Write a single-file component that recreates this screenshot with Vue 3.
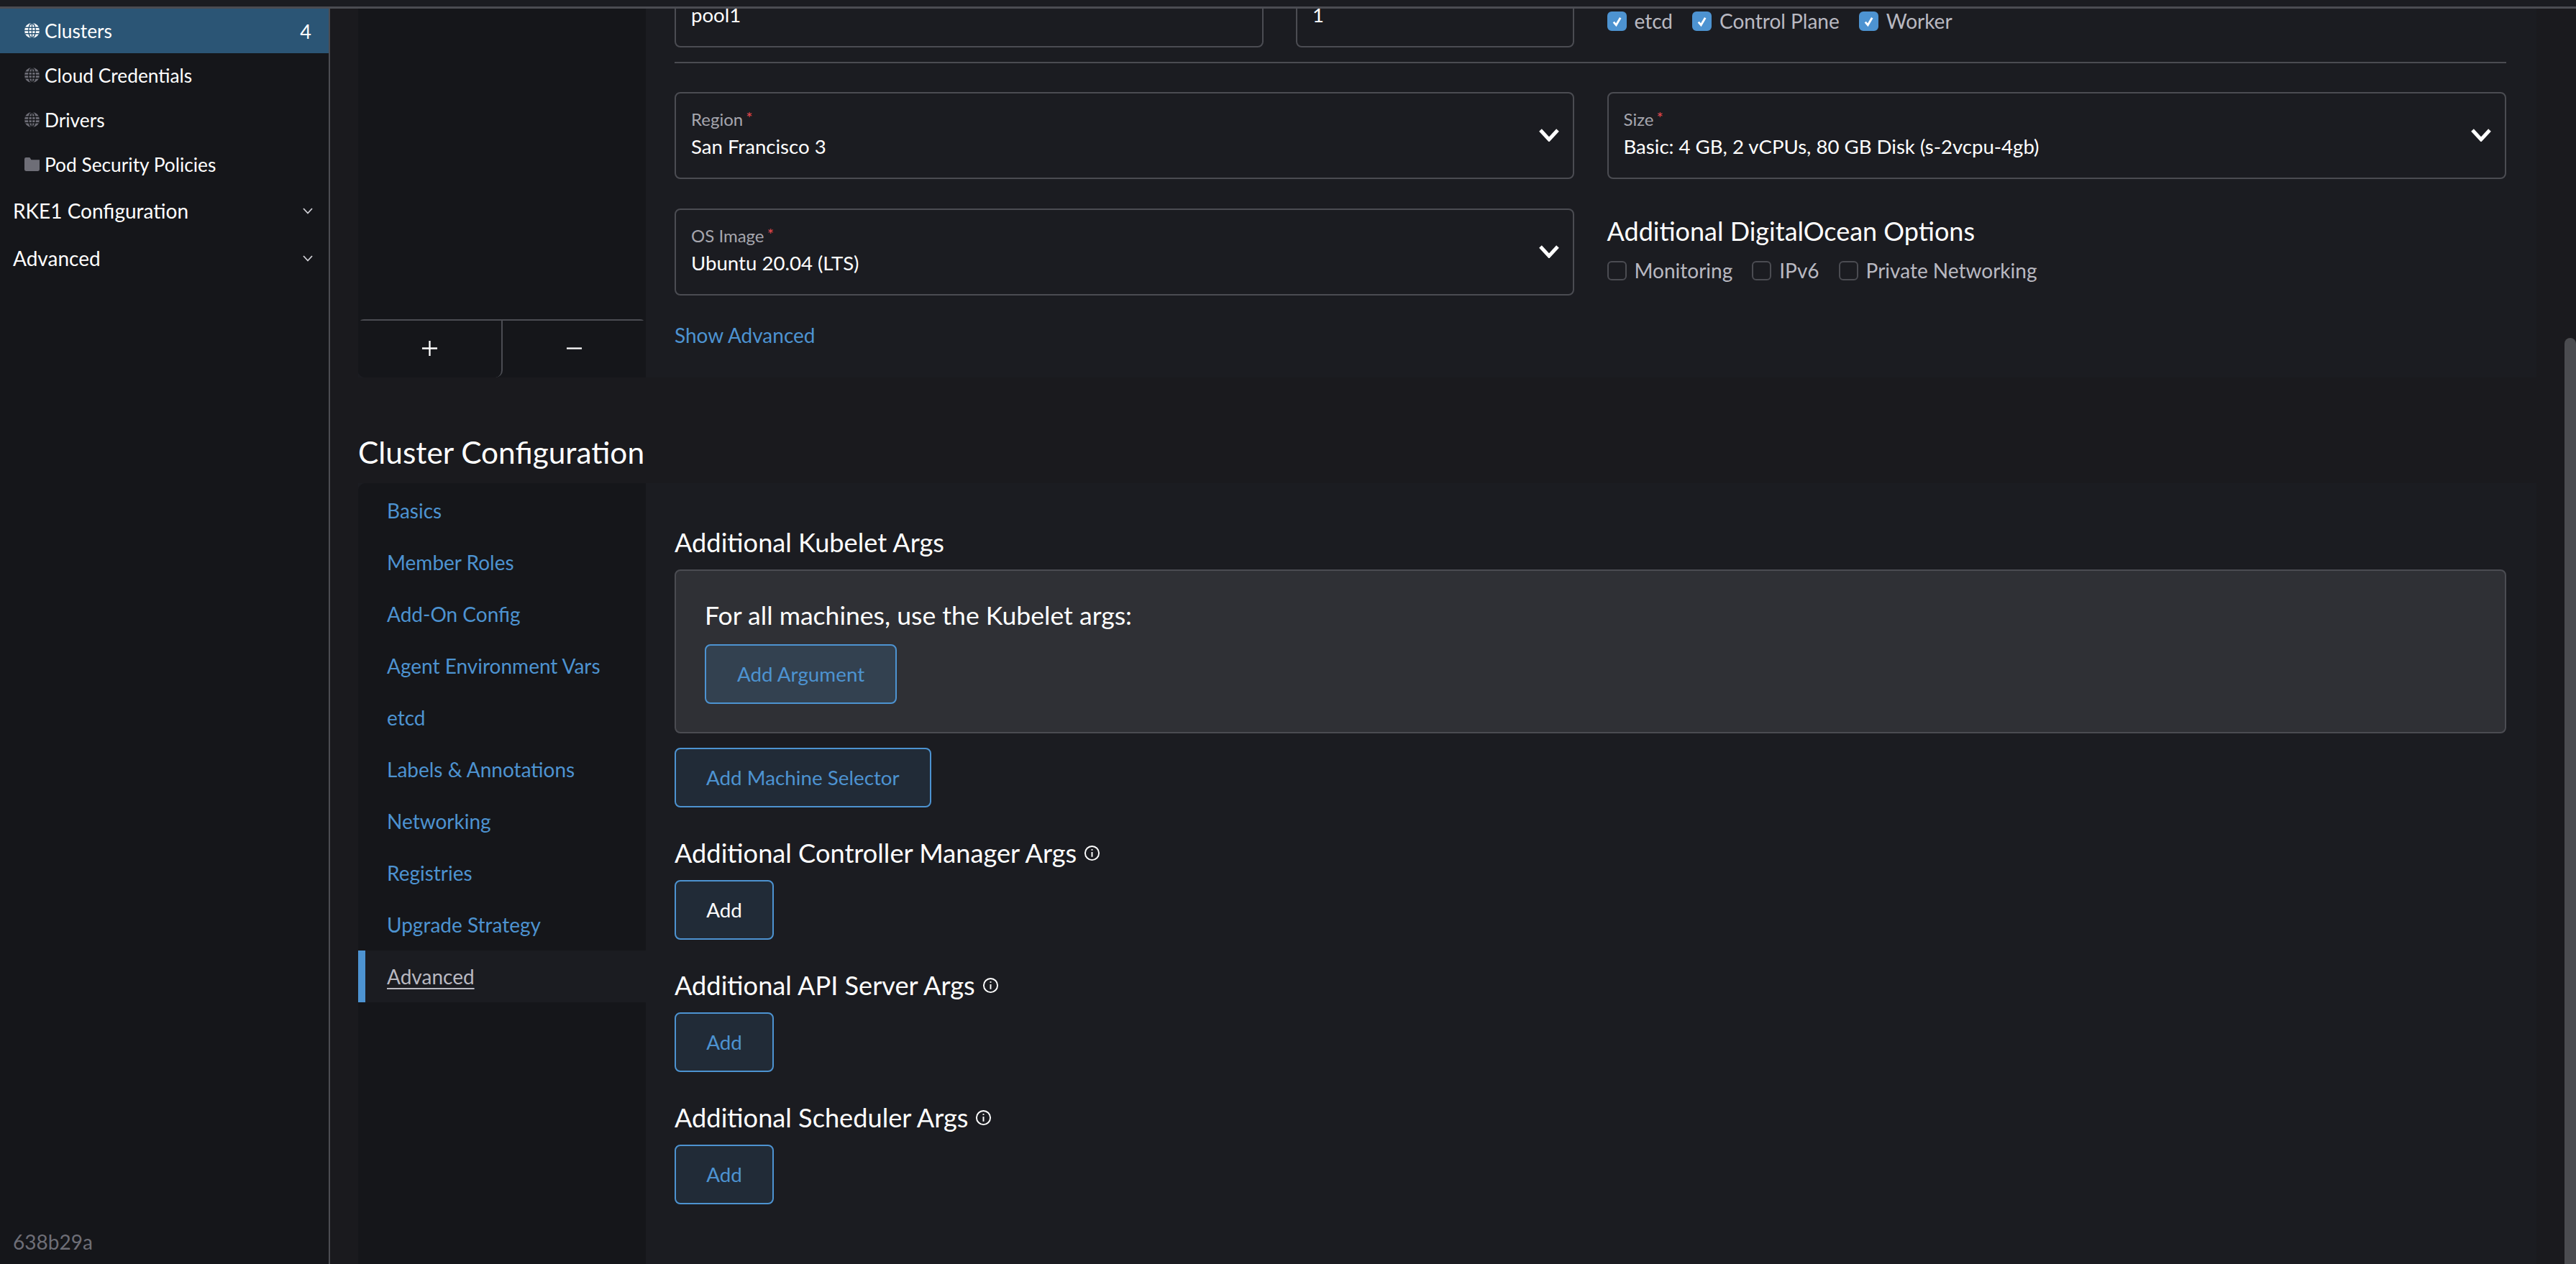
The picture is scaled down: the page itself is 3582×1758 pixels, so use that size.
<template>
  <div class="shell">
    <div class="topbar"></div>

    <div class="body">
      <aside class="sidebar">
        <a
          v-for="item in navItems"
          :key="item.label"
          class="nav-item"
          :class="{ active: item.active }"
        >
          <svg v-if="item.icon === 'globe'" class="nav-icon" viewBox="0 0 20 20">
            <circle cx="10" cy="10" r="10" fill="currentColor" />
            <g fill="none" class="globe-lines" stroke-width="1.3">
              <ellipse cx="10" cy="10" rx="4.6" ry="9.6" />
              <path d="M10 0v20M1 6h18M0 10h20M1 14h18" />
            </g>
          </svg>
          <svg v-else class="nav-icon" viewBox="0 0 20 20">
            <path d="M0 3q0-2 2-2h5l2 3h11v13q0 2-2 2H2q-2 0-2-2z" fill="currentColor" />
          </svg>
          <span class="nav-label">{{ item.label }}</span>
          <span v-if="item.count" class="nav-count">{{ item.count }}</span>
        </a>

        <div v-for="group in navGroups" :key="group" class="nav-group">
          <span>{{ group }}</span>
          <svg class="nav-caret" viewBox="0 0 14 9">
            <path d="M1 1l6 6.5L13 1" fill="none" stroke="currentColor" stroke-width="1.8" />
          </svg>
        </div>

        <div class="version">638b29a</div>
      </aside>

      <main class="main">
        <div class="content">
          <!-- machine pool, scrolled past the top of the page -->
          <section class="panel pool-panel">
            <div class="pool-tabs">
              <div class="pool-actions">
                <button type="button" class="pool-btn">
                  <svg viewBox="0 0 24 24"><path d="M12 1v22M1 12h22" /></svg>
                </button>
                <button type="button" class="pool-btn">
                  <svg viewBox="0 0 24 24"><path d="M1 12h22" /></svg>
                </button>
              </div>
            </div>

            <div class="pool-body">
              <div class="two-col">
                <div class="pool-top">
                  <div class="field"><span class="field-value">pool1</span></div>
                  <div class="field"><span class="field-value">1</span></div>
                </div>
                <div class="check-row roles">
                  <label v-for="role in roles" :key="role" class="check">
                    <span class="box checked">
                      <svg viewBox="0 0 16 16"><path d="M4 9l3 3.5L12 4" /></svg>
                    </span>
                    {{ role }}
                  </label>
                </div>
              </div>

              <hr class="rule" />

              <div class="two-col">
                <div class="field select">
                  <span class="field-label">Region <i>*</i></span>
                  <span class="field-value">San Francisco 3</span>
                  <svg class="select-caret" viewBox="0 0 30 18"><path d="M3 2l12 13L27 2" /></svg>
                </div>
                <div class="field select">
                  <span class="field-label">Size <i>*</i></span>
                  <span class="field-value">Basic: 4 GB, 2 vCPUs, 80 GB Disk (s-2vcpu-4gb)</span>
                  <svg class="select-caret" viewBox="0 0 30 18"><path d="M3 2l12 13L27 2" /></svg>
                </div>
              </div>

              <div class="two-col second">
                <div class="field select">
                  <span class="field-label">OS Image <i>*</i></span>
                  <span class="field-value">Ubuntu 20.04 (LTS)</span>
                  <svg class="select-caret" viewBox="0 0 30 18"><path d="M3 2l12 13L27 2" /></svg>
                </div>
                <div class="extra-options">
                  <h3>Additional DigitalOcean Options</h3>
                  <div class="check-row">
                    <label v-for="opt in doOptions" :key="opt" class="check">
                      <span class="box"></span>
                      {{ opt }}
                    </label>
                  </div>
                </div>
              </div>

              <a class="show-advanced">Show Advanced</a>
            </div>
          </section>

          <h2 class="section-title">Cluster Configuration</h2>

          <section class="panel config-panel">
            <nav class="config-tabs">
              <a
                v-for="tab in tabs"
                :key="tab"
                class="config-tab"
                :class="{ selected: tab === 'Advanced' }"
              >{{ tab }}</a>
            </nav>

            <div class="config-body">
              <h3 class="args-title first">Additional Kubelet Args</h3>
              <div class="args-box">
                <p>For all machines, use the Kubelet args:</p>
                <button type="button" class="btn on-box">Add Argument</button>
              </div>
              <button type="button" class="btn selector">Add Machine Selector</button>

              <template v-for="arg in extraArgs" :key="arg.title">
                <h3 class="args-title">
                  {{ arg.title }}
                  <svg class="info" viewBox="0 0 24 24">
                    <circle cx="12" cy="12" r="10" />
                    <path d="M12 10.5v7M12 6.2v2" />
                  </svg>
                </h3>
                <button type="button" class="btn add" :class="{ hover: arg.hover }">Add</button>
              </template>
            </div>
          </section>
        </div>

        <div class="scroll-thumb"></div>
      </main>
    </div>
  </div>
</template>

<script setup>
const navItems = [
  { label: 'Clusters', icon: 'globe', active: true, count: 4 },
  { label: 'Cloud Credentials', icon: 'globe' },
  { label: 'Drivers', icon: 'globe' },
  { label: 'Pod Security Policies', icon: 'folder' }
]

const navGroups = ['RKE1 Configuration', 'Advanced']

const roles = ['etcd', 'Control Plane', 'Worker']
const doOptions = ['Monitoring', 'IPv6', 'Private Networking']

const tabs = [
  'Basics',
  'Member Roles',
  'Add-On Config',
  'Agent Environment Vars',
  'etcd',
  'Labels & Annotations',
  'Networking',
  'Registries',
  'Upgrade Strategy',
  'Advanced'
]

const extraArgs = [
  { title: 'Additional Controller Manager Args', hover: true },
  { title: 'Additional API Server Args' },
  { title: 'Additional Scheduler Args' }
]
</script>

<style>
html, body { margin: 0; background: #1a1b1f; }
</style>

<style scoped>
.shell {
  width: 3582px;
  height: 1758px;
  overflow: hidden;
  display: flex;
  flex-direction: column;
  background: #1a1a1e;
  color: #fff;
  font-family: Lato, "Liberation Sans", sans-serif;
  font-size: 28px;
}

.topbar { height: 9px; background: #1b1c21; border-bottom: 3px solid #4b4c52; flex: none; }
.body { flex: 1; display: flex; min-height: 0; }

/* side nav */
.sidebar {
  width: 457px;
  flex: none;
  display: flex;
  flex-direction: column;
  background: #15161a;
  border-right: 2px solid #4b4c52;
}
.nav-item {
  height: 62px;
  padding: 0 24px 0 34px;
  display: flex;
  align-items: center;
  font-size: 26.3px;
  color: #fff;
}
.nav-item.active { background: #2b5575; }
.nav-icon { width: 21px; height: 21px; margin-right: 7px; color: #6e6e77; position: relative; top: -1px; }
.nav-item.active .nav-icon { color: #fff; }
.globe-lines { stroke: #15161a; }
.nav-item.active .globe-lines { stroke: #2b5575; }
.nav-label { flex: 1; }
.nav-count { font-size: 27px; }
.nav-group {
  height: 66px;
  padding: 0 22px 0 18px;
  display: flex;
  align-items: center;
  justify-content: space-between;
  font-size: 28px;
}
.nav-caret { width: 14px; height: 9px; color: #d0d0d6; }
.version { margin-top: auto; padding: 0 18px 15px; height: 31px; font-size: 28px; line-height: 31px; color: #6e6e77; }

/* main scroller */
.main { flex: 1; position: relative; overflow: hidden; }
.content { margin-top: -130px; padding-left: 39px; width: 3029px; }
.panel { display: grid; grid-template-columns: 400px 1fr; background: #1b1c21; }

.pool-panel { height: 643px; }
.pool-tabs { display: flex; flex-direction: column; justify-content: flex-end; background: #15161a; border-radius: 10px 0 0 10px; }
.pool-actions {
  display: flex;
  height: 81px;
  box-sizing: border-box;
  border-top: 2px solid #4b4c52;
  border-radius: 8px 8px 0 0;
}
.pool-btn {
  flex: 1;
  background: #15161a;
  border: 0;
  display: grid;
  place-items: center;
  padding: 0 0 3px;
}
.pool-btn:first-child { border-right: 2px solid #4b4c52; border-radius: 0 0 10px 10px; }
.pool-btn svg { width: 23px; height: 23px; fill: none; stroke: #fff; stroke-width: 2.4; }

.pool-body { padding: 63px 42px 0 40px; }
.two-col { display: grid; grid-template-columns: 1fr 1fr; column-gap: 46px; }
.two-col.second { margin-top: 41px; }
.pool-top { display: grid; grid-template-columns: 819px 1fr; column-gap: 45px; }

.field {
  height: 121px;
  box-sizing: border-box;
  border: 2px solid #4b4c52;
  border-radius: 8px;
  padding: 0 22px 26px 21px;
  display: flex;
  flex-direction: column;
  justify-content: flex-end;
  position: relative;
}
.field-label { font-size: 24px; line-height: 32px; color: #a6a6ae; margin-bottom: 4px; }
.field-label i { color: #e5484d; font-style: normal; font-size: 22px; position: relative; top: -3px; margin-left: -2px; }
.field-value { font-size: 27.6px; line-height: 34px; color: #fff; }
.select-caret {
  position: absolute;
  top: 49px;
  right: 18px;
  width: 30px;
  height: 18px;
  fill: none;
  stroke: #fff;
  stroke-width: 5;
}

.check-row { display: flex; gap: 27px; align-items: center; }
.roles { align-self: flex-end; padding-bottom: 20px; }
.check { display: flex; align-items: center; gap: 11px; font-size: 28px; color: #b9b9c1; }
.box {
  width: 27px;
  height: 27px;
  box-sizing: border-box;
  border: 2px solid #4b4c52;
  border-radius: 6px;
  display: grid;
  place-items: center;
}
.box.checked { background: #4d93d1; border-color: #4d93d1; }
.box svg { width: 19px; height: 19px; fill: none; stroke: #fff; stroke-width: 2.4; }

.rule { margin: 20px 0 40px; height: 2px; border: 0; background: #4b4c52; }
.extra-options h3 { margin: 9px 0 16px; font-size: 36px; line-height: 44px; font-weight: 400; }
.show-advanced { display: block; margin-top: 38px; font-size: 28px; line-height: 34px; color: #4d93d1; }

.section-title { margin: 0; height: 147px; box-sizing: border-box; padding-top: 75px; font-size: 42.4px; line-height: 58px; font-weight: 400; }

/* cluster config tabs */
.config-panel { height: 1100px; }
.config-tabs { background: #15161a; display: flex; flex-direction: column; border-radius: 10px 0 0 0; padding-top: 2px; }
.config-tab { height: 72px; line-height: 72px; padding-left: 40px; font-size: 28px; color: #4d93d1; flex: none; }
.config-tab.selected {
  background: #1b1c21;
  border-left: 10px solid #4d93d1;
  padding-left: 30px;
  color: #b9b9c1;
  text-decoration: underline;
  text-underline-offset: 5px;
  text-decoration-thickness: 2px;
}

.config-body { padding: 55px 42px 0 40px; }
.args-title { margin: 0; font-size: 36.2px; line-height: 50px; font-weight: 400; display: flex; align-items: center; gap: 10px; height: 50px; }
.args-title.first { height: 54px; }
.info { width: 23px; height: 23px; fill: none; stroke: #fff; stroke-width: 2; }
.args-box {
  margin-top: 11px;
  height: 228px;
  box-sizing: border-box;
  padding: 39px 40px;
  background: #2f3035;
  border: 2px solid #4b4c52;
  border-radius: 8px;
}
.args-box p { margin: 0 0 17px; font-size: 35.6px; line-height: 46px; }
.btn {
  display: block;
  height: 83px;
  box-sizing: border-box;
  padding: 0 42px;
  border: 2px solid #4d93d1;
  border-radius: 8px;
  background: #212b37;
  color: #4d93d1;
  font-family: inherit;
  font-size: 27.8px;
}
.btn.on-box { background: #334150; padding: 0 43px; }
.btn.selector { margin: 20px 0 38px; }
.btn.add { width: 138px; padding: 0; margin: 13px 0 38px; }
.btn.add.hover { color: #fff; }

.scroll-thumb {
  position: absolute;
  top: 458px;
  right: 0;
  bottom: 0;
  width: 16px;
  border-radius: 8px 8px 0 0;
  background: #4b4c50;
}
</style>
